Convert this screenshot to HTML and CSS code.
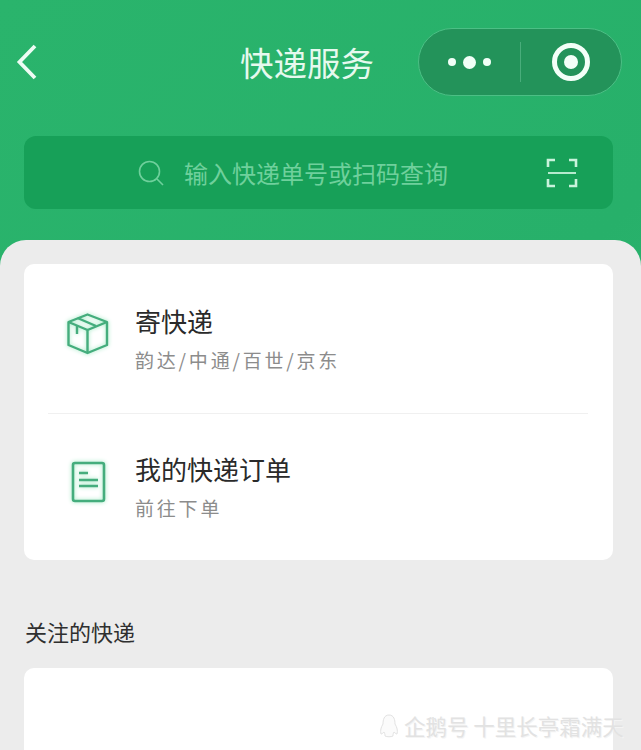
FILE: index.html
```html
<!DOCTYPE html>
<html lang="zh-CN">
<head>
  <meta charset="UTF-8" />
  <title>快递服务</title>
  <link rel="stylesheet" href="styles.css">
</head>
<body>
  <div class="header">
    <div class="nav">
      <svg class="back" width="22" height="36" viewBox="0 0 22 36"><path d="M19 2 L3.500 18 L19 34" fill="none" stroke="#eefcf4" stroke-width="3.8"/></svg>
      <div class="title">快递服务</div>
      <div class="capsule">
        <div class="capsule-part">
          <span class="dot"></span><span class="dot big"></span><span class="dot"></span>
        </div>
        <div class="capsule-line"></div>
        <div class="capsule-part">
          <span class="target"></span>
        </div>
      </div>
    </div>
    <div class="search">
      <svg class="search-icon" width="28" height="28" viewBox="0 0 28 28"><circle cx="12.5" cy="12.5" r="10" fill="none" stroke="#6fd09c" stroke-width="1.6"/><path d="M20 20 L26 26" stroke="#6fd09c" stroke-width="1.6"/></svg>
      <span class="placeholder">输入快递单号或扫码查询</span>
      <svg class="scan" width="32" height="30" viewBox="0 0 32 30"><path d="M2 9 V2 H9 M23 2 H30 V9 M2 21 V28 H9 M23 28 H30 V21" fill="none" stroke="#c9f3dc" stroke-width="2.6"/><path d="M2 15 H30" stroke="#c9f3dc" stroke-width="1.8"/></svg>
    </div>
  </div>

  <div class="panel">
    <div class="card">
      <div class="row">
        <svg class="row-icon" width="42" height="42" viewBox="0 0 42 42" fill="none" stroke="#45ad7d" stroke-width="2.4" stroke-linejoin="round"><path d="M20.500 1.500 L40 9 V32 L20.500 40 L1.500 32 V9 Z"/><path d="M1.500 9 L20.500 17 L40 9 M20.500 17 V40"/><path d="M10.500 5 L29 13 M10 13 V21"/></svg>
        <div class="row-text">
          <div class="row-title">寄快递</div>
          <div class="row-sub">韵达/中通/百世/京东</div>
        </div>
      </div>
      <div class="divider"></div>
      <div class="row second">
        <svg class="row-icon" width="42" height="42" viewBox="0 0 42 42" fill="none" stroke="#45ad7d" stroke-width="2.6" stroke-linejoin="round"><rect x="6" y="2" width="31" height="38" rx="2"/><path d="M12 12 H21 M12 19 H31 M12 25 H31"/></svg>
        <div class="row-text">
          <div class="row-title">我的快递订单</div>
          <div class="row-sub">前往下单</div>
        </div>
      </div>
    </div>
    <div class="section-title">关注的快递</div>
    <div class="card empty"></div>
  </div>

  <div class="watermark">
    <svg width="20" height="26" viewBox="0 0 20 26"><path d="M10 2 C5 2 4 7 4 11 C2 14 1 18 2 21 C3 21 4 20 5 19 C6 21 6 22 6 23 C8 24 12 24 14 23 C14 22 14 21 15 19 C16 20 17 21 18 21 C19 18 18 14 16 11 C16 7 15 2 10 2 Z" fill="#fbfbfb" stroke="#e2e2e2" stroke-width="1"/></svg>
    <span>企鹅号 十里长亭霜满天</span>
  </div>
</body>
</html>
```
FILE: styles.css
```css
html, body {
  margin: 0;
  height: 750px;
  overflow: hidden;
}
body {
  position: relative;
  font-family: "Noto Sans CJK SC", "Noto Sans", sans-serif;
  background: linear-gradient(135deg, #2ab46c, #27b06a 60%, #2fb873);
}
.header {
  padding-top: 28px;
}
.nav {
  display: flex;
  align-items: center;
  height: 68px;
  padding: 0 19px 0 16px;
}
.back {
  flex: none;
}
.title {
  margin-left: auto;
  margin-right: 44px;
  font-size: 33.500px;
  line-height: 68px;
  color: #e6f9ee;
}
.capsule {
  display: flex;
  align-items: center;
  box-sizing: border-box;
  width: 204px;
  height: 68px;
  background: #23935a;
  border: 1px solid #4cbf85;
  border-radius: 34px;
}
.capsule-part {
  flex: 1;
  display: flex;
  align-items: center;
  justify-content: center;
  gap: 7px;
}
.capsule-line {
  width: 1px;
  height: 40px;
  background: #49ad7b;
}
.dot {
  width: 8px;
  height: 8px;
  border-radius: 50%;
  background: #f1fff7;
}
.dot.big {
  width: 13px;
  height: 13px;
}
.target {
  box-sizing: border-box;
  display: flex;
  width: 38px;
  height: 38px;
  border: 5px solid #f3fff8;
  border-radius: 50%;
}
.target::after {
  content: "";
  width: 14px;
  height: 14px;
  margin: auto;
  border-radius: 50%;
  background: #f3fff8;
}
.search {
  display: flex;
  align-items: center;
  height: 73px;
  margin: 40px 28px 0 24px;
  padding: 0 35px 0 113px;
  background: #17a058;
  border-radius: 12px;
}
.search-icon {
  flex: none;
}
.placeholder {
  margin-left: 19px;
  font-size: 24px;
  line-height: 72px;
  color: #6fd09c;
}
.scan {
  flex: none;
  margin-left: auto;
}
.panel {
  margin-top: 31px;
  height: 510px;
  box-sizing: border-box;
  padding: 24px 28px 0 24px;
  background: #ececec;
  border-radius: 26px 26px 0 0;
}
.card {
  background: #fff;
  border-radius: 10px;
}
.row {
  display: flex;
  align-items: flex-start;
  padding: 38px 24px 0 43px;
  height: 111px;
}
.row.second {
  height: 110px;
  padding-top: 36px;
}
.row-icon {
  flex: none;
  margin-top: 11px;
  filter: drop-shadow(0 0 2px #9be8c0);
}
.row-text {
  margin-left: 26px;
}
.row-title {
  font-size: 26px;
  line-height: 38px;
  color: #2a2a2a;
}
.row-sub {
  margin-top: 4px;
  font-size: 19px;
  line-height: 32px;
  letter-spacing: 2.800px;
  color: #8c8c8c;
}
.divider {
  height: 1px;
  margin: 0 25px 0 24px;
  background: #f0f0f0;
}
.section-title {
  margin: 55px 0 21px 1px;
  font-size: 22px;
  line-height: 32px;
  color: #2f2f2f;
}
.card.empty {
  height: 82px;
  border-radius: 10px 10px 0 0;
}
.watermark {
  position: absolute;
  left: 379px;
  top: 713px;
  display: flex;
  align-items: center;
  gap: 5px;
  font-size: 21.500px;
  line-height: 26px;
  color: #e2e2e2;
  text-shadow: 1px 1px 0 #f4f4f4;
  white-space: nowrap;
}
```
